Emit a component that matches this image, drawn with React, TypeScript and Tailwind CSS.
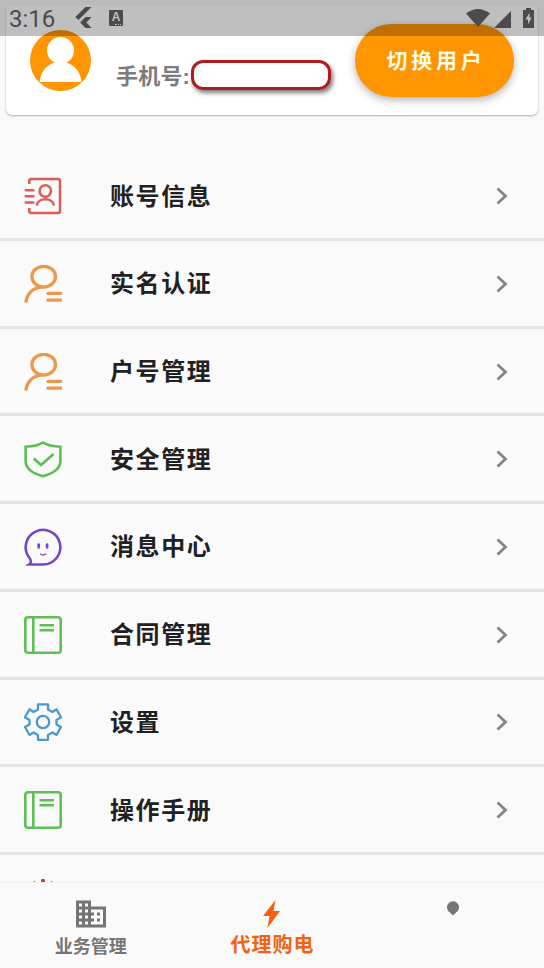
import { ReactNode } from "react";
import { MdBusiness } from "react-icons/md";

function AccountIcon() {
  return (
    <svg width="38" height="38" viewBox="0 0 38 38" fill="none" stroke="#dc5a5a" strokeWidth="2.5">
      <path d="M5.3 7V3.7Q5.3 2 7 2H34Q36 2 36 4V34Q36 36 34 36H7Q5.3 36 5.3 34.3V31" />
      <path d="M1.8 13.2H9.4M1.8 19.2H9.4M1.8 25.5H9.4" strokeLinecap="round" />
      <circle cx="21.3" cy="14" r="5.7" />
      <path d="M12.7 28.5C14 20.3 28.6 20.3 30 28.5" />
    </svg>
  );
}

function PersonIcon() {
  return (
    <svg width="38" height="38" viewBox="0 0 38 38" fill="none" stroke="#ea994b" strokeWidth="3.3">
      <ellipse cx="19.7" cy="11.7" rx="11.8" ry="10.4" />
      <path d="M17.5 22.1C9 22.5 3 28.5 1.8 37.5" />
      <path d="M24 28.3H36.6M24 35.2H36.6" strokeLinecap="round" />
    </svg>
  );
}

function ShieldIcon() {
  return (
    <svg width="38" height="38" viewBox="0 0 38 38" fill="none" stroke="#5abf50" strokeWidth="2.6">
      <path d="M19 2.5C14.5 5.6 8.5 6.5 1.6 6.7V21C1.6 28.5 9 33.5 19 36.2C29 33.5 36.4 28.5 36.4 21V6.7C29.5 6.5 23.5 5.6 19 2.5Z" />
      <path d="M9.8 18.5L17 25L29.5 14" />
    </svg>
  );
}

function MessageIcon() {
  return (
    <svg width="38" height="38" viewBox="0 0 38 38" fill="none" stroke="#7546c8" strokeWidth="2.6">
      <path d="M19 36.5A17.3 17.3 0 1 0 5.5 30C7.6 32.5 7.3 34.8 5 36.5H19Z" />
      <path d="M14.7 16.5V19.5M23.1 16.5V19.5" strokeWidth="2.6" strokeLinecap="round" />
      <path d="M16 25.8Q19 28.4 22 25.8" strokeWidth="1.2" />
    </svg>
  );
}

function BookIcon() {
  return (
    <svg width="38" height="38" viewBox="0 0 38 38" fill="none" stroke="#5ebf55" strokeWidth="2.6">
      <rect x="1.3" y="1.3" width="35.4" height="35.4" rx="2.8" />
      <path d="M9.3 1.5V36.5M15.5 9.3H30M15.5 14.3H30" />
    </svg>
  );
}

function GearIcon() {
  return (
    <svg width="38" height="38" viewBox="0 0 38 38" fill="none" stroke="#4b97d2" strokeWidth="2.3" strokeLinejoin="round">
      <path d="M14 1.3H24V6.5L28.5 9L32.5 6.3L37 14.3L32.5 17V21.5L37 24L32.5 32L28.5 29.5L24 32V36.8H14V32L9.5 29.5L5.5 32L1 24L5.5 21.5V17L1 14.3L5.5 6.3L9.5 9L14 6.5Z" />
      <circle cx="19" cy="19" r="6.2" />
    </svg>
  );
}

function PowerIcon() {
  return (
    <svg width="38" height="38" viewBox="0 0 38 38" fill="none" stroke="#c23b36" strokeWidth="2.6" strokeLinecap="round">
      <path d="M19 1.5V19" strokeWidth="3.8" />
      <path d="M10.5 3.6A16 16 0 1 0 27.5 3.6" />
    </svg>
  );
}

const menuItems: { label: string; icon: ReactNode }[] = [
  { label: "账号信息", icon: <AccountIcon /> },
  { label: "实名认证", icon: <PersonIcon /> },
  { label: "户号管理", icon: <PersonIcon /> },
  { label: "安全管理", icon: <ShieldIcon /> },
  { label: "消息中心", icon: <MessageIcon /> },
  { label: "合同管理", icon: <BookIcon /> },
  { label: "设置", icon: <GearIcon /> },
  { label: "操作手册", icon: <BookIcon /> },
];

function StatusBar() {
  return (
    <div className="absolute inset-x-0 top-0 flex h-9 items-center bg-black/25 pr-2.5 pl-[9px] text-[#4b4b4b]">
      <span className="w-[66px] pt-0.5 font-[Roboto] text-[24px] leading-9">3:16</span>
      <svg width="17" height="22" viewBox="0 0 17 22" fill="currentColor">
        <path d="M10.5 0H16.5L3.5 13L0.3 10ZM10.5 10H16.5L11.5 15.5L16.5 21H10.5L5.2 15.5Z" />
      </svg>
      <div className="relative ml-[17px] flex h-4 w-[14px] items-center justify-center rounded-[1px] bg-[#4b4b4b] pb-0.5 text-[12px] font-bold text-[#bfbfbf]">
        A
        <span className="absolute right-0.5 bottom-px w-[6px] border-b border-dotted border-[#bfbfbf]" />
      </div>
      <svg className="ml-auto" width="24" height="18" viewBox="0 0 24 18" fill="currentColor">
        <path d="M0 4.5Q12-4.5 24 4.5L12 18Z" />
      </svg>
      <svg className="mt-0.5 ml-1" width="17" height="17" viewBox="0 0 17 17" fill="currentColor">
        <path d="M17 0V17H0Z" />
      </svg>
      <svg className="ml-3" width="11" height="20" viewBox="0 0 11 20" fill="currentColor">
        <path d="M3 0H8V2H11V20H0V2H3Z" />
        <path d="M6.5 4.5L2.5 11.5H5V16.5L8.7 9.5H6.5Z" fill="#bfbfbf" />
      </svg>
    </div>
  );
}

function ProfileCard() {
  return (
    <div className="mx-1.5 mt-[5px] flex h-[110px] shrink-0 rounded-md bg-white shadow-[0_1px_2px_rgba(0,0,0,0.3)]">
      <svg className="mt-[25px] ml-6 shrink-0" width="61" height="61" viewBox="0 0 61 61">
        <circle cx="30.5" cy="30.5" r="30.5" fill="#ff9500" />
        <circle cx="30.5" cy="20.5" r="13.5" fill="#fff" />
        <path d="M9.5 52C11 39 19 32 30.5 32S50 39 51.5 52Z" fill="#fff" />
      </svg>
      <span className="mt-[56px] ml-[25px] w-[75px] shrink-0 text-[22px] leading-8 font-bold tracking-[0.2px] whitespace-nowrap text-[#7c7c7c]">
        手机号:
      </span>
      <div className="mt-[55px] h-[30px] w-[140px] shrink-0 rounded-[12px] border-3 border-[#b01c20] shadow-[2px_3px_4px_rgba(0,0,0,0.5)]" />
      <button className="mt-[19px] ml-6 h-[73px] w-[159px] shrink-0 rounded-full bg-[#ff9500] pl-[3px] text-[21px] font-bold tracking-[3.7px] text-[#fffbe5] shadow-[0_3px_8px_rgba(0,0,0,0.3)]">
        切换用户
      </button>
    </div>
  );
}

function MenuRow({ label, icon }: { label: string; icon: ReactNode }) {
  return (
    <li className="flex h-[87.7px] shrink-0 items-center border-b-3 border-[#e4e4e4] pt-px pl-6">
      {icon}
      <span className="ml-12 pt-px text-[24px] leading-8 font-bold tracking-[1.6px] text-[#212121]">{label}</span>
      <svg className="mr-9 ml-auto" width="12" height="18" viewBox="0 0 12 18" fill="none" stroke="#858585" strokeWidth="2.8">
        <path d="M1.5 1.5L9.5 9L1.5 16.5" />
      </svg>
    </li>
  );
}

function BottomNav() {
  return (
    <nav className="grid h-[86px] shrink-0 grid-cols-3 border-t border-[#f1f1f1] bg-[#fafafa]">
      <div className="flex flex-col items-center pt-[13px] text-[#757575]">
        <MdBusiness size={36} />
        <span className="mt-[3px] text-[18px] leading-6 font-bold">业务管理</span>
      </div>
      <div className="flex flex-col items-center pt-[17px] text-[#f26211]">
        <svg className="ml-px" width="18" height="28" viewBox="0 0 18 28" fill="currentColor">
          <path d="M12.5 0L0 16H6.5L4.5 28L17 11H10.5Z" />
        </svg>
        <span className="mt-[5px] pl-px text-[20px] leading-6 font-bold tracking-[1px]">代理购电</span>
      </div>
      <div className="flex flex-col items-center pt-[18px] text-[#757575]">
        <svg width="12" height="15" viewBox="0 0 12 15" fill="currentColor">
          <path d="M6 14.5L3 11.5A6 6 0 1 1 9 11.5Z" />
        </svg>
      </div>
    </nav>
  );
}

export default function App() {
  return (
    <div className="relative flex h-[968px] w-[544px] flex-col overflow-hidden bg-[#fafafa] font-['Liberation_Sans','Noto_Sans_CJK_SC',sans-serif]">
      <div className="flex min-h-0 flex-1 flex-col overflow-hidden">
        <ProfileCard />
        <ul className="mt-[38.4px] flex flex-col">
          {menuItems.map((item) => (
            <MenuRow key={item.label} {...item} />
          ))}
          {/* only the top of the last row shows above the nav bar */}
          <li className="flex h-[87.7px] shrink-0 items-start pt-6 pl-6">
            <PowerIcon />
          </li>
        </ul>
      </div>
      <BottomNav />
      <StatusBar />
    </div>
  );
}
